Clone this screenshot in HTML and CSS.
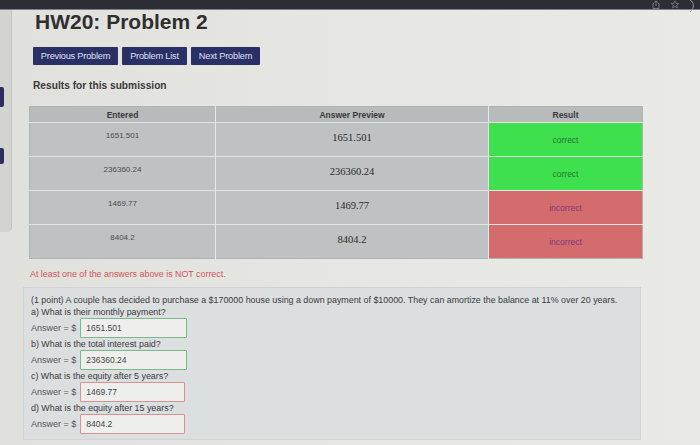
FILE: index.html
```html
<!DOCTYPE html>
<html>
<head>
<meta charset="utf-8">
<link rel="stylesheet" href="styles.css">
</head>
<body>
<div class="topbar">
  <div class="topicons">
    <svg class="ico" width="10" height="9" viewBox="0 0 10 9"><path d="M3 3.5H2V8.5H8V3.5H7M5 6V0.8M3.3 2.4L5 0.8L6.7 2.4" fill="none" stroke="#8a8e94" stroke-width="0.8"/></svg>
    <svg class="ico" width="10" height="9" viewBox="0 0 10 9"><path d="M5 0.8L6.1 3.3L8.8 3.5L6.7 5.2L7.4 7.9L5 6.4L2.6 7.9L3.3 5.2L1.2 3.5L3.9 3.3Z" fill="none" stroke="#8a8e94" stroke-width="0.7"/></svg>
    <svg class="arc" width="8" height="12" viewBox="0 0 8 12"><path d="M1 0C5 2 6 8 1 12" fill="none" stroke="#9a9ea3" stroke-width="1"/></svg>
  </div>
</div>
<div class="page">
  <div class="sidebar">
    <div class="blip blip1"></div>
    <div class="blip blip2"></div>
  </div>
  <div class="main">
    <h1 class="title">HW20: Problem 2</h1>
    <div class="buttons">
      <span class="btn btn-prev">Previous Problem</span>
      <span class="btn btn-list">Problem List</span>
      <span class="btn btn-next">Next Problem</span>
    </div>
    <div class="results-label">Results for this submission</div>
    <table class="results">
      <tr class="head">
        <th class="c-entered">Entered</th>
        <th class="c-preview">Answer Preview</th>
        <th class="c-result">Result</th>
      </tr>
      <tr class="row">
        <td class="entered">1651.501</td>
        <td class="preview">1651.501</td>
        <td class="ok">correct</td>
      </tr>
      <tr class="row">
        <td class="entered">236360.24</td>
        <td class="preview">236360.24</td>
        <td class="ok">correct</td>
      </tr>
      <tr class="row">
        <td class="entered">1469.77</td>
        <td class="preview">1469.77</td>
        <td class="bad">incorrect</td>
      </tr>
      <tr class="row">
        <td class="entered">8404.2</td>
        <td class="preview">8404.2</td>
        <td class="bad">incorrect</td>
      </tr>
    </table>
    <div class="warning">At least one of the answers above is NOT correct.</div>
    <div class="problem">
      <div class="qline">(1 point) A couple has decided to purchase a $170000 house using a down payment of $10000. They can amortize the balance at 11% over 20 years.</div>
      <div class="qline">a) What is their monthly payment?</div>
      <div class="arow"><span class="alabel">Answer = $</span><span class="ainput good">1651.501</span></div>
      <div class="qline">b) What is the total interest paid?</div>
      <div class="arow"><span class="alabel">Answer = $</span><span class="ainput good">236360.24</span></div>
      <div class="qline">c) What is the equity after 5 years?</div>
      <div class="arow"><span class="alabel">Answer = $</span><span class="ainput wrong">1469.77</span></div>
      <div class="qline">d) What is the equity after 15 years?</div>
      <div class="arow"><span class="alabel">Answer = $</span><span class="ainput wrong">8404.2</span></div>
    </div>
  </div>
</div>
</body>
</html>
```

FILE: styles.css
```css
html, body {
  margin: 0;
  padding: 0;
}
body {
  width: 700px;
  height: 445px;
  overflow: hidden;
  background: linear-gradient(90deg, #e0e0dc 0%, #e6e6e2 50%, #e9eae6 100%);
  font-family: "Liberation Sans", Arial, sans-serif;
  color: #333;
}
.topbar {
  height: 9px;
  background: #2b2f35;
  border-bottom: 1px solid #7d8084;
  display: flex;
  justify-content: flex-end;
  align-items: flex-start;
}
.topicons {
  display: flex;
  align-items: flex-start;
  gap: 9px;
  margin-right: 3px;
}
.ico, .arc {
  display: block;
}
.page {
  display: flex;
  align-items: flex-start;
}
.sidebar {
  width: 11px;
  height: 222px;
  background: #d3d3d0;
  border-right: 1px solid #c4c4c0;
  border-bottom-right-radius: 5px;
  flex: none;
  display: flex;
  flex-direction: column;
}
.blip {
  width: 4px;
  background: #2c2f5e;
  border-radius: 0 2px 2px 0;
}
.blip1 {
  margin-top: 77px;
  height: 20px;
}
.blip2 {
  margin-top: 41px;
  height: 16px;
}
.main {
  flex: 1;
  display: flex;
  flex-direction: column;
  align-items: flex-start;
}
.title {
  margin: 0 0 0 23px;
  font-size: 21px;
  line-height: 24px;
  font-weight: bold;
  color: #2f2f2f;
}
.buttons {
  display: flex;
  gap: 4px;
  margin: 13px 0 0 21px;
}
.btn {
  display: block;
  height: 18px;
  line-height: 18px;
  background: #2a2f66;
  color: #dfe2ee;
  font-size: 9.2px;
  text-align: center;
  border-radius: 1px;
  letter-spacing: -0.2px;
  white-space: nowrap;
}
.btn-prev { width: 85px; }
.btn-list { width: 65px; }
.btn-next { width: 69px; }
.results-label {
  margin: 15px 0 0 21px;
  font-size: 10.2px;
  line-height: 12px;
  font-weight: bold;
  color: #3a3a3a;
}
.results {
  margin: 14px 0 0 17px;
  border-collapse: collapse;
  width: 612px;
  background: #bfc2c2;
  border: 1px solid #b0b3b3;
  table-layout: fixed;
}
.results th, .results td {
  padding: 0;
  text-align: center;
  border-top: 1px solid #e2e4e3;
}
.results th + th, .results td + td {
  border-left: 1px solid #e6e8e7;
}
.results tr.head {
  height: 16px;
}
.results tr.row {
  height: 34px;
}
.results th {
  background: #b8bbbb;
  font-size: 8.5px;
  font-weight: bold;
  color: #3a3a3a;
  border-top: none;
}
.c-entered { width: 185px; }
.c-preview { width: 272px; }
.c-result { width: 153px; }
.results td.entered {
  font-size: 8px;
  color: #4a4a4a;
  padding-bottom: 8px;
}
.results td.preview {
  font-family: "Liberation Serif", "Times New Roman", serif;
  font-size: 10.5px;
  color: #2a2a2a;
  padding-bottom: 4px;
}
.results td.ok {
  background: #3fe04e;
  color: #22792f;
  font-size: 8.5px;
}
.results td.bad {
  background: #d46b6c;
  color: #7c3c78;
  font-size: 8.5px;
}
.warning {
  margin: 10px 0 0 18px;
  font-size: 8.9px;
  line-height: 10px;
  color: #d2545a;
}
.problem {
  margin: 8px 0 0 11px;
  width: 601px;
  background: #dcdfe0;
  border: 1px solid #cfd3d3;
  padding: 6px 8px 5px 7px;
  display: flex;
  flex-direction: column;
  align-items: flex-start;
}
.qline {
  font-size: 8.9px;
  line-height: 12px;
  color: #3a3a3a;
  white-space: nowrap;
}
.arow {
  display: flex;
  align-items: center;
  height: 20px;
  gap: 4px;
}
.alabel {
  font-size: 9px;
  color: #555;
}
.ainput {
  display: block;
  box-sizing: border-box;
  width: 107px;
  height: 20px;
  line-height: 18px;
  padding-left: 5px;
  background: #eeefed;
  font-size: 8.5px;
  color: #444;
  border-radius: 1px;
}
.ainput.good {
  border: 1px solid #7db888;
}
.ainput.wrong {
  border: 1px solid #dc9092;
  width: 105px;
}
```
